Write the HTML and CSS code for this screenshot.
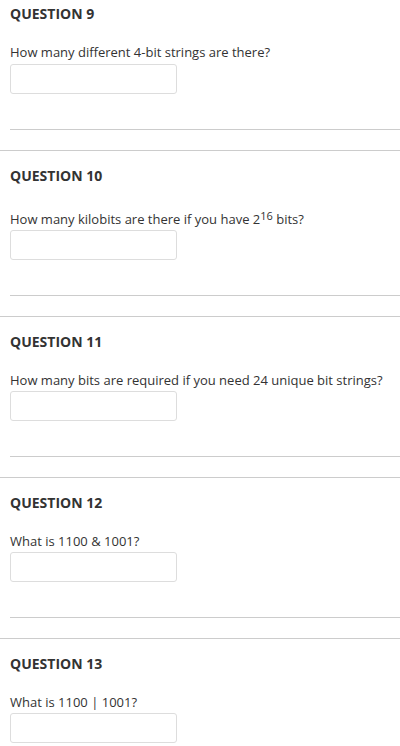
FILE: index.html
```html
<!DOCTYPE html>
<html>
<head>
<meta charset="utf-8">
<link rel="stylesheet" href="styles.css">
</head>
<body>
<div class="question first">
  <div class="title">QUESTION 9</div>
  <div class="text">How many different 4-bit strings are there?</div>
  <div class="answer"></div>
  <div class="sep"></div>
</div>
<div class="question">
  <div class="title">QUESTION 10</div>
  <div class="text">How many kilobits are there if you have 2<sup>16</sup> bits?</div>
  <div class="answer"></div>
  <div class="sep"></div>
</div>
<div class="question">
  <div class="title">QUESTION 11</div>
  <div class="text">How many bits are required if you need 24 unique bit strings?</div>
  <div class="answer"></div>
  <div class="sep"></div>
</div>
<div class="question">
  <div class="title">QUESTION 12</div>
  <div class="text">What is 1100 &amp; 1001?</div>
  <div class="answer"></div>
  <div class="sep"></div>
</div>
<div class="question">
  <div class="title">QUESTION 13</div>
  <div class="text">What is 1100 | 1001?</div>
  <div class="answer"></div>
  <div class="sep"></div>
</div>
</body>
</html>
```
FILE: styles.css
```css
html, body {
  margin: 0;
  padding: 0;
  background: #fff;
}
body {
  font-family: "Open Sans", "Liberation Sans", sans-serif;
  color: #333;
  width: 400px;
  overflow: hidden;
}
.question {
  border-top: 1px solid #ccc;
  padding: 15px 0 20px 10px;
}
.question.first {
  border-top: none;
  padding-top: 4px;
}
.title {
  font-size: 14px;
  font-weight: bold;
  line-height: 20px;
  color: #333;
}
.text {
  font-size: 13px;
  line-height: 18px;
  margin-top: 19px;
  color: #333;
}
.text sup {
  font-size: 11px;
  line-height: 22px;
  vertical-align: 4px;
}
.answer {
  margin-top: 2px;
  width: 165px;
  height: 28px;
  border: 1px solid #ddd;
  border-radius: 3px;
  background: #fff;
}
.first .answer {
  margin-top: 3px;
}
.sep {
  margin-top: 35px;
  border-top: 1px solid #ccc;
}
```
